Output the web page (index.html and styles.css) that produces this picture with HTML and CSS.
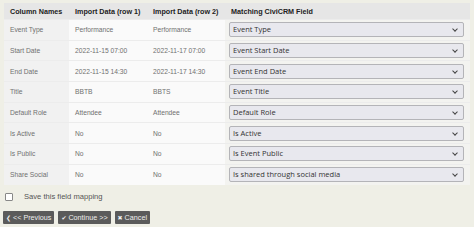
FILE: index.html
```
<!DOCTYPE html>
<html lang="en">
<head>
<meta charset="UTF-8">
<title>Import Events - Match Fields</title>
<link rel="stylesheet" href="styles.css">
</head>
<body>
<div class="import-form">
    <table class="map-table">
        <thead>
            <tr>
                <th class="col-name">Column Names</th>
                <th class="col-data">Import Data (row 1)</th>
                <th class="col-data">Import Data (row 2)</th>
                <th class="col-field">Matching CiviCRM Field</th>
            </tr>
        </thead>
        <tbody>
            <tr>
                <td class="name">Event Type</td><td>Performance</td><td>Performance</td>
                <td class="field"><div class="select">Event Type<span class="chev"></span></div></td>
            </tr>
            <tr>
                <td class="name">Start Date</td><td>2022-11-15 07:00</td><td>2022-11-17 07:00</td>
                <td class="field"><div class="select">Event Start Date<span class="chev"></span></div></td>
            </tr>
            <tr>
                <td class="name">End Date</td><td>2022-11-15 14:30</td><td>2022-11-17 14:30</td>
                <td class="field"><div class="select">Event End Date<span class="chev"></span></div></td>
            </tr>
            <tr>
                <td class="name">Title</td><td>BBTB</td><td>BBTS</td>
                <td class="field"><div class="select">Event Title<span class="chev"></span></div></td>
            </tr>
            <tr>
                <td class="name">Default Role</td><td>Attendee</td><td>Attendee</td>
                <td class="field"><div class="select">Default Role<span class="chev"></span></div></td>
            </tr>
            <tr>
                <td class="name">Is Active</td><td>No</td><td>No</td>
                <td class="field"><div class="select">Is Active<span class="chev"></span></div></td>
            </tr>
            <tr>
                <td class="name">Is Public</td><td>No</td><td>No</td>
                <td class="field"><div class="select">Is Event Public<span class="chev"></span></div></td>
            </tr>
            <tr>
                <td class="name">Share Social</td><td>No</td><td>No</td>
                <td class="field"><div class="select">Is shared through social media<span class="chev"></span></div></td>
            </tr>
        </tbody>
    </table>
    <div class="save-row">
        <span class="checkbox"></span>
        <span class="save-label">Save this field mapping</span>
    </div>
    <div class="buttons">
        <span class="btn"><span class="ico">&#10094;</span> &lt;&lt; Previous</span>
        <span class="btn"><span class="ico">&#10004;</span> Continue &gt;&gt;</span>
        <span class="btn"><span class="ico">&#10006;</span> Cancel</span>
    </div>
</div>
</body>
</html>
```

FILE: styles.css
```
body, html {
    margin: 0;
    background-color: #efefe6;
    font-family: "Liberation Sans", Arial, sans-serif;
}
.import-form {
    padding: 3px 4px 0 4px;
}
.map-table {
    width: 466px;
    border-collapse: collapse;
    table-layout: fixed;
    font-size: 6.7px;
    color: #707070;
}
.map-table th {
    background-color: #e6e6e6;
    color: #222;
    font-weight: bold;
    font-size: 7.2px;
    text-align: left;
    height: 16px;
    padding: 0 0 0 6px;
    white-space: nowrap;
}
.col-name { width: 59px; }
.col-data { width: 72px; }
.map-table td {
    height: 19.7px;
    padding: 0 0 0 6px;
    background-color: #fafafa;
    border-top: 1px solid #ececec;
}
.map-table td.name {
    background-color: #f1f1f1;
}
.map-table td.field {
    background-color: #f3f3f0;
    padding: 0 6px 0 4px;
}
.select {
    position: relative;
    height: 13px;
    line-height: 13px;
    border: 1px solid #b4b4b8;
    border-radius: 2px;
    background-color: #e8e8ee;
    color: #333;
    font-family: "Open Sans", "DejaVu Sans", sans-serif;
    font-size: 7.5px;
    padding-left: 3px;
}
.chev {
    position: absolute;
    right: 6px;
    top: 4px;
    width: 3px;
    height: 3px;
    border-right: 1px solid #444;
    border-bottom: 1px solid #444;
    transform: rotate(45deg);
}
.save-row {
    display: flex;
    align-items: center;
    margin-top: 6px;
    height: 12px;
    font-size: 7.6px;
    color: #555;
}
.checkbox {
    width: 6px;
    height: 6px;
    border: 1px solid #888;
    border-radius: 1px;
    background: #fff;
    margin: 0 11px 0 1px;
}
.buttons {
    display: flex;
    gap: 4px;
    margin-top: 8px;
    margin-left: -1px;
}
.btn {
    background-color: #5b5b5b;
    color: #eee;
    font-size: 7.2px;
    padding: 2px 3px;
    border-radius: 1px;
    line-height: 9.5px;
}
.ico {
    font-size: 6px;
    font-family: "DejaVu Sans", sans-serif;
}
```
